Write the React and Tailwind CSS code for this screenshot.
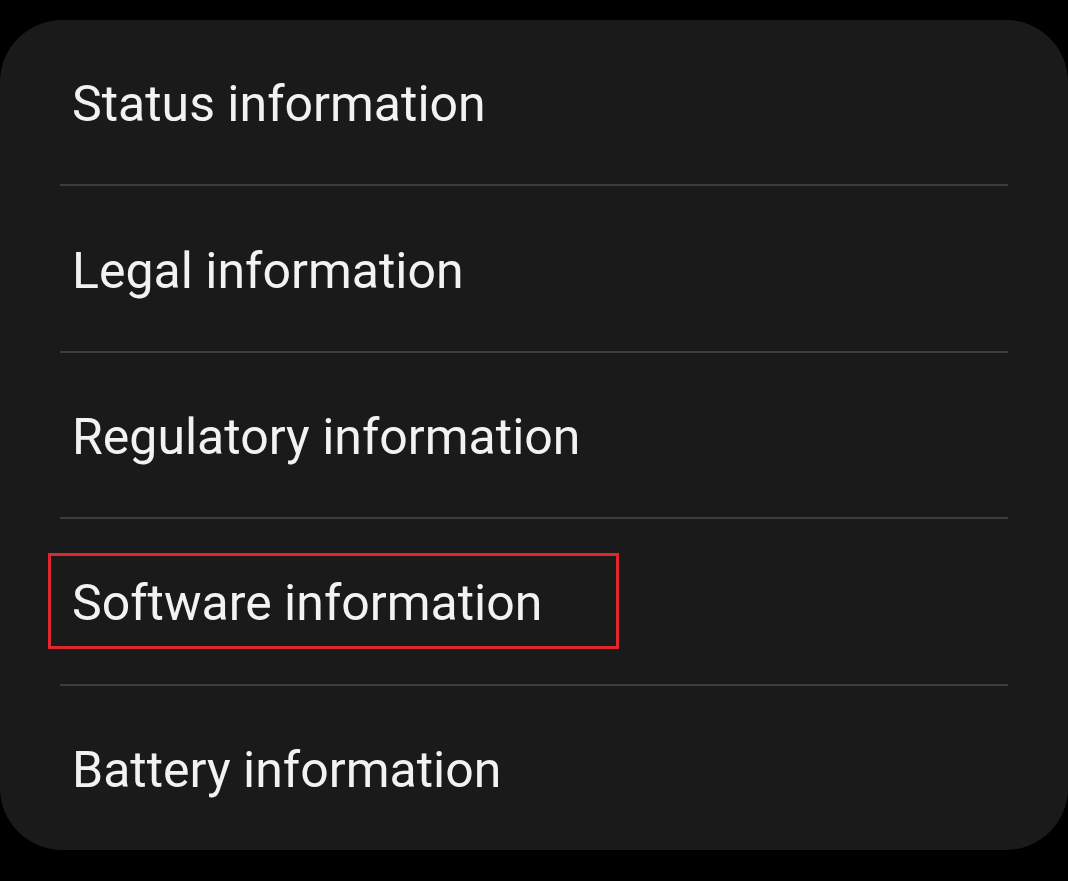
import React from 'react';

const items = [
  'Status information',
  'Legal information',
  'Regulatory information',
  'Software information',
  'Battery information',
];

const App = () => {
  return (
    <div className="w-[1068px] h-[881px] bg-black pt-[20px] overflow-hidden" style={{ fontFamily: 'Roboto, "Noto Sans", sans-serif' }}>
      {/* Card */}
      <div className="h-[830px] bg-[#1a1a1a] rounded-[62px] flex flex-col">
        {items.map((label, i) => (
          <React.Fragment key={label}>
            {i > 0 && <div className="mx-[60px] h-[2px] bg-[#3d3d3d] shrink-0" />}
            <div className="flex-1 flex items-center pl-[48px]">
              {label === 'Software information' ? (
                <div className="h-[96px] w-[571px] border-[3px] border-[#e0262e] pl-[21px] pt-[3px] flex items-center">
                  <span className="text-[50px] leading-none text-[#f2f2f2]">{label}</span>
                </div>
              ) : (
                <span className="pl-[24px] pt-[4px] text-[50px] leading-none text-[#f2f2f2]">{label}</span>
              )}
            </div>
          </React.Fragment>
        ))}
      </div>
    </div>
  );
};

export default App;
